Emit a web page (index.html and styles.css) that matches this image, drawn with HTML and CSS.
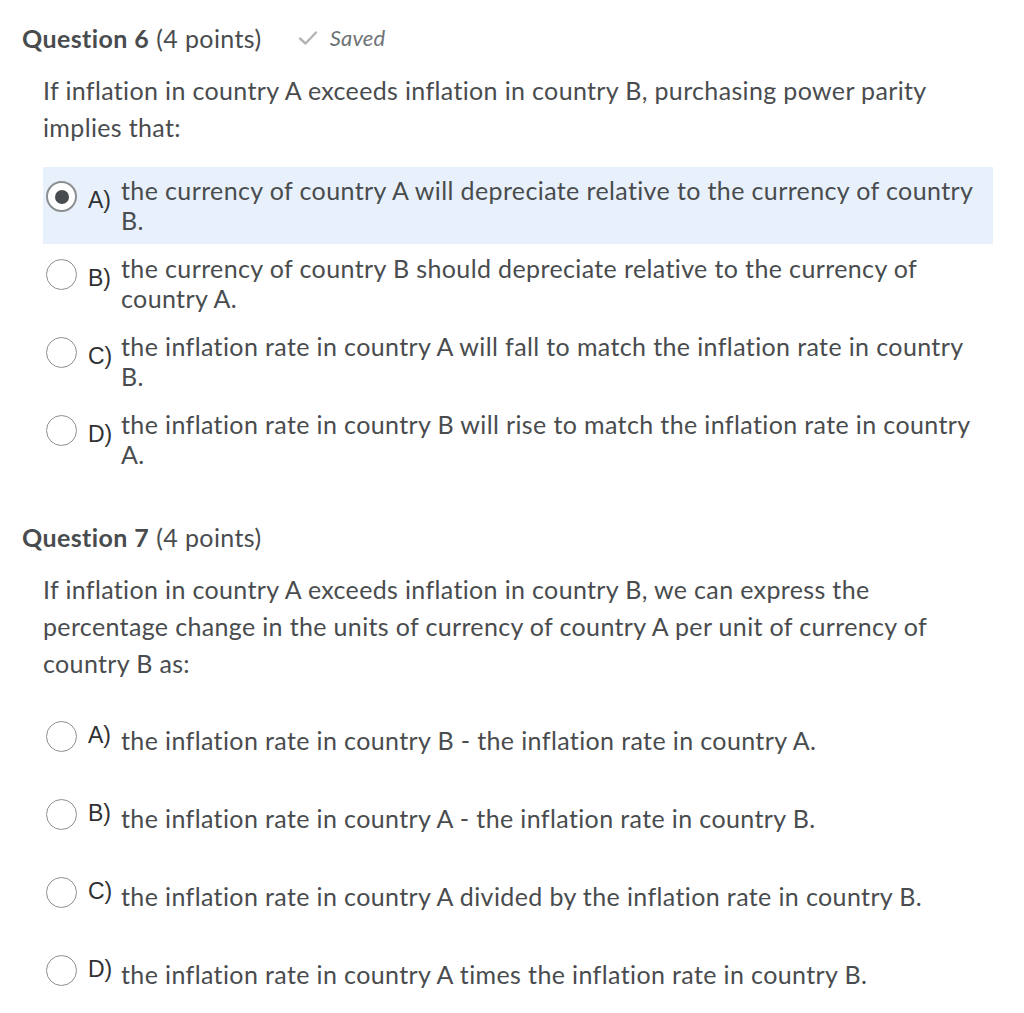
FILE: index.html
```html
<!DOCTYPE html>
<html>
<head>
<meta charset="utf-8">
<link rel="stylesheet" href="styles.css">
</head>
<body>
<div class="page">
  <section class="question q6">
    <h2 class="q-head"><span class="q-title">Question 6</span> (4 points)<span class="saved"><svg class="check" width="20" height="16" viewBox="0 0 20 16"><path d="M2 8.5 L7.5 13.5 L18 2.5" fill="none" stroke="#b1b5b8" stroke-width="2.4" stroke-linecap="round" stroke-linejoin="round"/></svg><em>Saved</em></span></h2>
    <p class="q-body">If inflation in country A exceeds inflation in country B, purchasing power parity<br>implies that:</p>
    <div class="options">
      <div class="option selected multi">
        <span class="radio checked"></span><span class="label">A)</span>
        <span class="text">the currency of country A will depreciate relative to the currency of country<br>B.</span>
      </div>
      <div class="option multi">
        <span class="radio"></span><span class="label">B)</span>
        <span class="text">the currency of country B should depreciate relative to the currency of<br>country A.</span>
      </div>
      <div class="option multi">
        <span class="radio"></span><span class="label">C)</span>
        <span class="text">the inflation rate in country A will fall to match the inflation rate in country<br>B.</span>
      </div>
      <div class="option multi">
        <span class="radio"></span><span class="label">D)</span>
        <span class="text">the inflation rate in country B will rise to match the inflation rate in country<br>A.</span>
      </div>
    </div>
  </section>
  <section class="question q7">
    <h2 class="q-head"><span class="q-title">Question 7</span> (4 points)</h2>
    <p class="q-body">If inflation in country A exceeds inflation in country B, we can express the<br>percentage change in the units of currency of country A per unit of currency of<br>country B as:</p>
    <div class="options">
      <div class="option single">
        <span class="radio"></span><span class="label">A)</span>
        <span class="text">the inflation rate in country B - the inflation rate in country A.</span>
      </div>
      <div class="option single">
        <span class="radio"></span><span class="label">B)</span>
        <span class="text">the inflation rate in country A - the inflation rate in country B.</span>
      </div>
      <div class="option single">
        <span class="radio"></span><span class="label">C)</span>
        <span class="text">the inflation rate in country A divided by the inflation rate in country B.</span>
      </div>
      <div class="option single">
        <span class="radio"></span><span class="label">D)</span>
        <span class="text">the inflation rate in country A times the inflation rate in country B.</span>
      </div>
    </div>
  </section>
</div>
</body>
</html>
```
FILE: styles.css
```css
html, body {
  margin: 0;
  padding: 0;
  background: #ffffff;
}
.page {
  font-family: Lato, "Noto Sans", sans-serif;
  color: #494c4e;
  padding-top: 20px;
}
.q-head {
  margin: 0 0 0 22px;
  font-size: 25px;
  line-height: 36px;
  font-weight: 400;
  letter-spacing: 0.4px;
  display: flex;
  align-items: center;
  white-space: nowrap;
}
.q-title {
  font-weight: 700;
  margin-right: 7px;
}
.saved {
  display: inline-flex;
  align-items: center;
  margin-left: 36px;
  font-size: 22px;
  letter-spacing: 0.2px;
  color: #6e7376;
}
.check {
  margin-right: 12px;
}
.q-body {
  margin: 16px 0 0 43px;
  width: 950px;
  font-size: 25px;
  letter-spacing: 0.35px;
  line-height: 37px;
  white-space: nowrap;
}
.options {
  margin-left: 43px;
  width: 950px;
  margin-top: 21px;
  display: flex;
  flex-direction: column;
  gap: 1px;
}
.option {
  display: flex;
  align-items: flex-start;
  padding: 8px 0 8px 3px;
  box-sizing: border-box;
  height: 77px;
}
.option.selected {
  background: #e8f1fb;
}
.radio {
  flex: none;
  width: 29px;
  height: 29px;
  border: 1px solid #8c8f92;
  border-radius: 50%;
  background: #fff;
  box-sizing: content-box;
  margin-top: 6px;
  display: flex;
  align-items: center;
  justify-content: center;
}
.radio.checked {
  border: 2px solid #8c8f92;
  width: 27px;
  height: 27px;
  box-shadow: inset 0 0 0 1px #fff;
}
.radio.checked::after {
  content: "";
  width: 14px;
  height: 14px;
  border-radius: 50%;
  background: #494c4e;
}
.label {
  flex: none;
  width: 33px;
  margin-left: 11px;
  font-family: "Liberation Sans", Arial, sans-serif;
  font-size: 23px;
  color: #2f3133;
  line-height: 30px;
}
.multi .label {
  margin-top: 10px;
}
.single .radio {
  margin-top: -3px;
}
.single .label {
  margin-top: -4px;
}
.text {
  font-size: 25px;
  letter-spacing: 0.38px;
  line-height: 30px;
  flex: 1;
  white-space: nowrap;
}
.single .text {
  padding-top: 1px;
}
.q7 .q-head {
  margin-top: 41px;
}
.q7 .options {
  margin-top: 34px;
}
```
